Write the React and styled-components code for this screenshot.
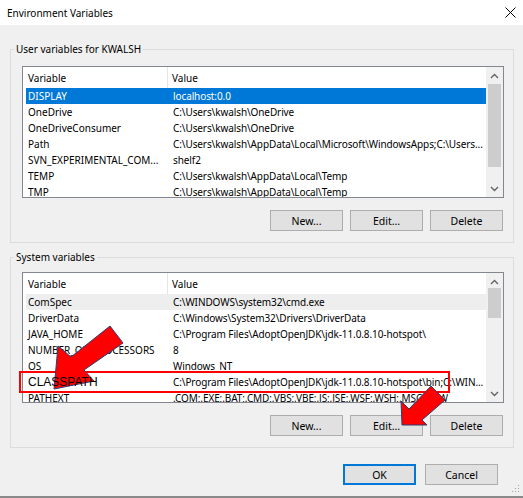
import React from 'react';
import styled, { createGlobalStyle } from 'styled-components';

const userVars = [
    ['DISPLAY', 'localhost:0.0'],
    ['OneDrive', 'C:\\Users\\kwalsh\\OneDrive'],
    ['OneDriveConsumer', 'C:\\Users\\kwalsh\\OneDrive'],
    ['Path', 'C:\\Users\\kwalsh\\AppData\\Local\\Microsoft\\WindowsApps;C:\\Users...'],
    ['SVN_EXPERIMENTAL_COM...', 'shelf2'],
    ['TEMP', 'C:\\Users\\kwalsh\\AppData\\Local\\Temp'],
    ['TMP', 'C:\\Users\\kwalsh\\AppData\\Local\\Temp'],
];

const systemVars = [
    ['ComSpec', 'C:\\WINDOWS\\system32\\cmd.exe'],
    ['DriverData', 'C:\\Windows\\System32\\Drivers\\DriverData'],
    ['JAVA_HOME', 'C:\\Program Files\\AdoptOpenJDK\\jdk-11.0.8.10-hotspot\\'],
    ['NUMBER_OF_PROCESSORS', '8'],
    ['OS', 'Windows_NT'],
    ['CLASSPATH', 'C:\\Program Files\\AdoptOpenJDK\\jdk-11.0.8.10-hotspot\\bin;C:\\WIN...'],
    ['PATHEXT', '.COM;.EXE;.BAT;.CMD;.VBS;.VBE;.JS;.JSE;.WSF;.WSH;.MSC;.PYW'],
];

const VarList = ({ rows, height, selected, hovered, marked, thumbTop, thumbHeight }) => {
    return (
        <ListBox $height={height}>
            <ListBody>
                <HeaderRow>
                    <HeadCell $first>Variable</HeadCell>
                    <HeadCell>Value</HeadCell>
                </HeaderRow>
                {rows.map(([name, value], i) => (
                    <Row key={name} $selected={i === selected} $hovered={i === hovered}>
                        <NameCell $marked={i === marked}>{name}</NameCell>
                        <ValueCell>{value}</ValueCell>
                    </Row>
                ))}
            </ListBody>
            <ScrollBar>
                <ScrollArrow>
                    <svg width="9" height="6" viewBox="0 0 9 6"><path d="M1 5 L4.5 1.5 L8 5" fill="none" stroke="#606060" strokeWidth="1.3"/></svg>
                </ScrollArrow>
                <Track>
                    <Thumb style={{ marginTop: thumbTop, height: thumbHeight }} />
                </Track>
                <ScrollArrow>
                    <svg width="9" height="6" viewBox="0 0 9 6"><path d="M1 1 L4.5 4.5 L8 1" fill="none" stroke="#606060" strokeWidth="1.3"/></svg>
                </ScrollArrow>
            </ScrollBar>
        </ListBox>
    );
};

const App = () => {
    return (
        <>
            <GlobalStyle />
            <Window>
                <TitleBar>
                    <span>Environment Variables</span>
                    <CloseButton>
                        <svg width="11" height="11" viewBox="0 0 11 11"><path d="M0.5 0.5 L10.5 10.5 M10.5 0.5 L0.5 10.5" stroke="#000" strokeWidth="1"/></svg>
                    </CloseButton>
                </TitleBar>
                <Body>
                    <Group $pad={9}>
                        <Legend>User variables for KWALSH</Legend>
                        <VarList rows={userVars} height={132} selected={0} thumbTop={0} thumbHeight={83} />
                        <ButtonRow>
                            <Button>New...</Button>
                            <Button>Edit...</Button>
                            <Button>Delete</Button>
                        </ButtonRow>
                    </Group>
                    <Group $pad={7} $top={6}>
                        <Legend>System variables</Legend>
                        <VarList rows={systemVars} height={131} hovered={0} marked={5} thumbTop={-2} thumbHeight={30} />
                        <ButtonRow>
                            <Button>New...</Button>
                            <Button>Edit...</Button>
                            <Button>Delete</Button>
                        </ButtonRow>
                    </Group>
                    <Footer>
                        <Button $primary>OK</Button>
                        <Button>Cancel</Button>
                    </Footer>
                </Body>
                <Highlight />
                <Arrows width="523" height="498" viewBox="0 0 523 498">
                    <polygon points="54,389 58,346 71,357 110,326 123,343 84,370 94,381" />
                    <polygon points="402,425 401,401 409,409 431,386 445,400 422,420 427,425" />
                </Arrows>
                <Grip width="8" height="8" viewBox="0 0 8 8">
                    <rect x="6" y="0" width="1" height="1" />
                    <rect x="3" y="3" width="1" height="1" />
                    <rect x="6" y="3" width="1" height="1" />
                    <rect x="0" y="6" width="1" height="1" />
                    <rect x="3" y="6" width="1" height="1" />
                    <rect x="6" y="6" width="1" height="1" />
                </Grip>
            </Window>
        </>
    );
};

const GlobalStyle = createGlobalStyle`
    body{
        margin: 0;
        background: #ffffff;
        font-family: "Noto Sans", "Open Sans", sans-serif;
        font-size: 10px;
        color: #000;
    }
`;

const Window = styled.div`
    position: relative;
    width: 523px;
    height: 498px;
    display: flex;
    flex-direction: column;
    overflow: hidden;
    box-sizing: border-box;
    border-bottom: 2px solid #8a8a8a;
`;

const TitleBar = styled.div`
    height: 25px;
    flex-shrink: 0;
    background: #ffffff;
    display: flex;
    align-items: center;
    justify-content: space-between;
    padding: 0 7px 0 7px;
    font-size: 10px;
`;

const CloseButton = styled.div`
    display: flex;
    align-items: center;
`;

const Body = styled.div`
    flex: 1;
    background: #f0f0f0;
    padding: 16px 9px 0 10px;
    display: flex;
    flex-direction: column;
`;

const Group = styled.fieldset`
    margin: ${p => p.$top || 0}px 0 0 0;
    padding: ${p => p.$pad}px 9px 11px 11px;
    border: 1px solid #dcdcdc;
    min-width: 0;
`;

const Legend = styled.legend`
    padding: 0 2px;
    margin-left: -8px;
    line-height: 16px;
    font-size: 10px;
`;

const ListBox = styled.div`
    height: ${p => p.$height}px;
    box-sizing: border-box;
    border: 1px solid #828790;
    background: #ffffff;
    display: flex;
    overflow: hidden;
`;

const ListBody = styled.div`
    flex: 1;
    min-width: 0;
    padding-left: 3px;
`;

const HeaderRow = styled.div`
    height: 21px;
    display: flex;
    align-items: stretch;
`;

const HeadCell = styled.div`
    display: flex;
    align-items: center;
    padding-left: ${p => (p.$first ? 2 : 4)}px;
    width: ${p => (p.$first ? '139px' : 'auto')};
    flex: ${p => (p.$first ? 'none' : 1)};
    border-right: ${p => (p.$first ? '1px solid #e5e5e5' : 'none')};
`;

const Row = styled.div`
    height: 16px;
    display: flex;
    align-items: center;
    background: ${p => (p.$selected ? '#0078d7' : p.$hovered ? '#eeeeee' : 'transparent')};
    color: ${p => (p.$selected ? '#ffffff' : '#000000')};
`;

const NameCell = styled.div`
    width: 140px;
    flex: none;
    padding-left: 2px;
    white-space: nowrap;
    overflow: hidden;
    position: ${p => (p.$marked ? 'relative' : 'static')};
    z-index: ${p => (p.$marked ? 3 : 'auto')};
    font-family: ${p => (p.$marked ? '"Liberation Sans", Arial, sans-serif' : 'inherit')};
    font-size: ${p => (p.$marked ? '12px' : 'inherit')};
`;

const ValueCell = styled.div`
    flex: 1;
    padding-left: 5px;
    white-space: nowrap;
    overflow: hidden;
    letter-spacing: -0.1px;
`;

const ScrollBar = styled.div`
    width: 17px;
    flex: none;
    background: #f0f0f0;
    display: flex;
    flex-direction: column;
`;

const ScrollArrow = styled.div`
    height: 17px;
    flex: none;
    display: flex;
    align-items: center;
    justify-content: center;
`;

const Track = styled.div`
    flex: 1;
    display: flex;
    flex-direction: column;
`;

const Thumb = styled.div`
    margin: 0 2px;
    background: #cdcdcd;
`;

const ButtonRow = styled.div`
    display: flex;
    justify-content: flex-end;
    gap: 7px;
    margin-top: 12px;
    padding-right: 1px;
`;

const Button = styled.div`
    width: 73px;
    height: 21px;
    box-sizing: border-box;
    display: flex;
    align-items: center;
    justify-content: center;
    background: #e1e1e1;
    border: ${p => (p.$primary ? '2px solid #0078d7' : '1px solid #adadad')};
    font-size: 10.5px;
`;

const Footer = styled.div`
    display: flex;
    justify-content: flex-end;
    gap: 9px;
    margin-top: 16px;
    padding-right: 16px;
`;

const Highlight = styled.div`
    position: absolute;
    left: 19px;
    top: 371px;
    width: 431px;
    height: 22px;
    box-sizing: border-box;
    border: 2px solid #ff0000;
    pointer-events: none;
`;

const Arrows = styled.svg`
    position: absolute;
    left: 0;
    top: 0;
    z-index: 2;
    pointer-events: none;
    polygon{
        fill: #ff0000;
        stroke: #2b3f73;
        stroke-width: 1;
        stroke-linejoin: miter;
    }
`;

const Grip = styled.svg`
    position: absolute;
    right: 3px;
    bottom: 3px;
    fill: #a0a0a0;
`;

export default App;
